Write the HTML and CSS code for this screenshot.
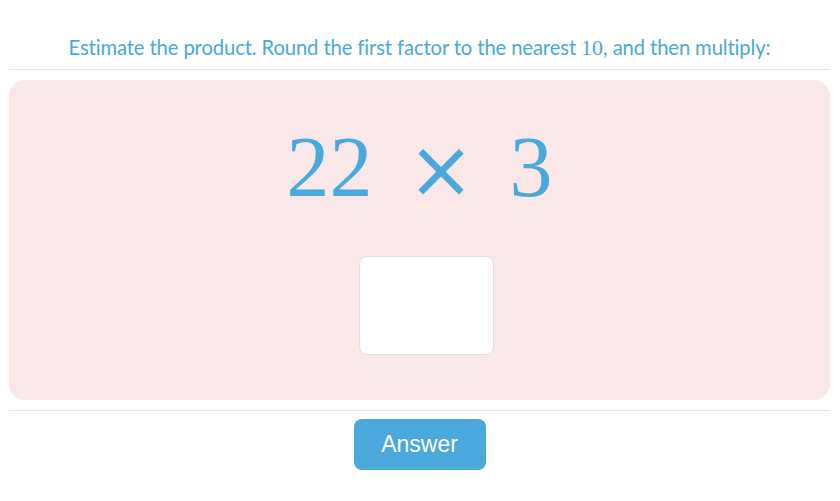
FILE: index.html
```html
<!DOCTYPE html>
<html>
<head>
<meta charset="utf-8">
<link rel="stylesheet" href="styles.css">
</head>
<body>
<div class="page">
  <p class="prompt">Estimate the product. Round the first factor to the nearest <span class="num">10</span>, and then multiply:</p>
  <div class="rule"></div>
  <div class="card">
    <div class="math"><span>22</span><span class="times">×</span><span>3</span></div>
    <div class="answer-box"></div>
  </div>
  <div class="rule rule-bottom"></div>
  <div class="actions">
    <button class="btn">Answer</button>
  </div>
</div>
</body>
</html>
```

FILE: styles.css
```css
html, body {
  margin: 0;
  padding: 0;
  background: #ffffff;
}
.page {
  margin: 0 10px 0 9px;
  display: flex;
  flex-direction: column;
}
.prompt {
  margin: 35px 0 10px;
  text-align: center;
  font-family: "Source Sans Pro", Lato, "Open Sans", sans-serif;
  font-size: 20.2px;
  line-height: 24px;
  height: 24px;
  letter-spacing: -0.1px;
  color: #4aa8dc;
}
.prompt .num {
  font-family: "Liberation Serif", serif;
  font-size: 22px;
  line-height: 1;
  letter-spacing: 0;
}
.rule {
  height: 1px;
  background: #dfe4e8;
}
.card {
  margin-top: 10px;
  height: 320px;
  background: #fae8e8;
  border-radius: 16px;
  display: flex;
  flex-direction: column;
  align-items: center;
}
.math {
  margin-top: 42px;
  display: flex;
  align-items: baseline;
  gap: 35px;
  font-family: "Liberation Serif", serif;
  font-size: 86px;
  line-height: 90px;
  color: #4aa8dc;
}
.math .times {
  font-family: "DejaVu Sans", sans-serif;
  font-weight: 400;
  font-size: 80px;
  position: relative;
  top: 1px;
}
.answer-box {
  margin-top: 42px;
  margin-left: 14px;
  width: 133px;
  height: 97px;
  background: #ffffff;
  border: 1px solid #dde1e8;
  border-radius: 8px;
}
.rule-bottom {
  margin-top: 10px;
}
.actions {
  display: flex;
  justify-content: center;
  padding-top: 8px;
}
.btn {
  width: 132px;
  height: 51px;
  border: none;
  border-radius: 8px;
  background: #4aa8dc;
  color: #ffffff;
  font-family: "Liberation Sans", Arial, sans-serif;
  font-size: 23px;
  padding: 0;
}
```
